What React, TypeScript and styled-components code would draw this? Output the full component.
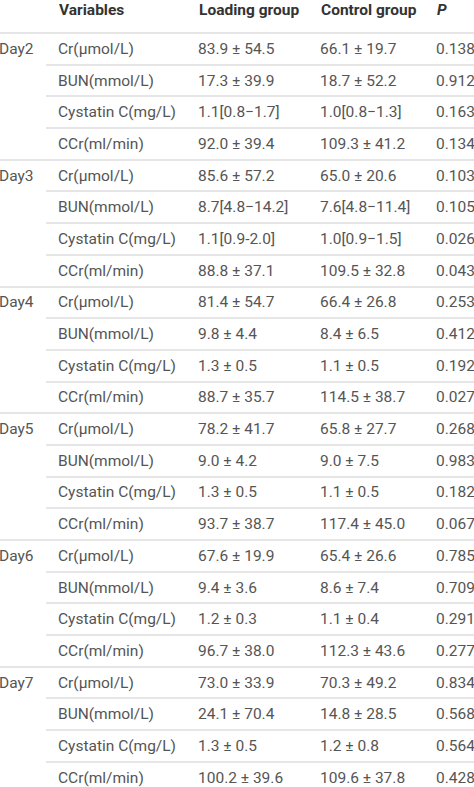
import React from "react";
import styled, { createGlobalStyle } from "styled-components";

const Global = createGlobalStyle`
  html, body { margin: 0; padding: 0; background: #fff; }
  body { width: 474px; height: 787px; overflow: hidden; font-family: Roboto, "Noto Sans", "Liberation Sans", sans-serif; }
`;

const Table = styled.div`
  width: 474px;
  display: flex;
  flex-direction: column;
`;

const Header = styled.div`
  display: grid;
  grid-template-columns: 59px 140px 122px 116px 1fr;
  height: 21px;
  padding-bottom: 11px;
  border-bottom: 2px solid #e6e6e6;
  align-items: start;
  font-size: 15.5px;
  line-height: 21px;
  font-weight: 700;
  color: #333;
  white-space: nowrap;
`;

const HeadCell = styled.div<{ $italic?: boolean }>`
  font-style: ${(p) => (p.$italic ? "italic" : "normal")};
`;

const Group = styled.div`
  display: flex;
  border-bottom: 2px solid #e6e6e6;
`;

const DayCell = styled.div`
  width: 47px;
  flex: none;
  height: 29.7px;
  display: flex;
  align-items: center;
  margin-left: -1px;
  font-size: 15.5px;
  color: #555;
`;

const Rows = styled.div`
  flex: 1;
  display: flex;
  flex-direction: column;
`;

const Row = styled.div<{ $first?: boolean }>`
  display: grid;
  grid-template-columns: 12px 140px 122px 116px 1fr;
  height: 29.7px;
  align-items: center;
  border-top: ${(p) => (p.$first ? "none" : "2px solid #e6e6e6")};
  font-size: 15.5px;
  color: #555;
  white-space: nowrap;
`;

const Cell = styled.div``;

type R = [string, string, string, string];
const groups: { day: string; rows: R[] }[] = [
  {
    day: "Day2",
    rows: [
      ["Cr(μmol/L)", "83.9 ± 54.5", "66.1 ± 19.7", "0.138"],
      ["BUN(mmol/L)", "17.3 ± 39.9", "18.7 ± 52.2", "0.912"],
      ["Cystatin C(mg/L)", "1.1[0.8−1.7]", "1.0[0.8−1.3]", "0.163"],
      ["CCr(ml/min)", "92.0 ± 39.4", "109.3 ± 41.2", "0.134"],
    ],
  },
  {
    day: "Day3",
    rows: [
      ["Cr(μmol/L)", "85.6 ± 57.2", "65.0 ± 20.6", "0.103"],
      ["BUN(mmol/L)", "8.7[4.8−14.2]", "7.6[4.8−11.4]", "0.105"],
      ["Cystatin C(mg/L)", "1.1[0.9-2.0]", "1.0[0.9−1.5]", "0.026"],
      ["CCr(ml/min)", "88.8 ± 37.1", "109.5 ± 32.8", "0.043"],
    ],
  },
  {
    day: "Day4",
    rows: [
      ["Cr(μmol/L)", "81.4 ± 54.7", "66.4 ± 26.8", "0.253"],
      ["BUN(mmol/L)", "9.8 ± 4.4", "8.4 ± 6.5", "0.412"],
      ["Cystatin C(mg/L)", "1.3 ± 0.5", "1.1 ± 0.5", "0.192"],
      ["CCr(ml/min)", "88.7 ± 35.7", "114.5 ± 38.7", "0.027"],
    ],
  },
  {
    day: "Day5",
    rows: [
      ["Cr(μmol/L)", "78.2 ± 41.7", "65.8 ± 27.7", "0.268"],
      ["BUN(mmol/L)", "9.0 ± 4.2", "9.0 ± 7.5", "0.983"],
      ["Cystatin C(mg/L)", "1.3 ± 0.5", "1.1 ± 0.5", "0.182"],
      ["CCr(ml/min)", "93.7 ± 38.7", "117.4 ± 45.0", "0.067"],
    ],
  },
  {
    day: "Day6",
    rows: [
      ["Cr(μmol/L)", "67.6 ± 19.9", "65.4 ± 26.6", "0.785"],
      ["BUN(mmol/L)", "9.4 ± 3.6", "8.6 ± 7.4", "0.709"],
      ["Cystatin C(mg/L)", "1.2 ± 0.3", "1.1 ± 0.4", "0.291"],
      ["CCr(ml/min)", "96.7 ± 38.0", "112.3 ± 43.6", "0.277"],
    ],
  },
  {
    day: "Day7",
    rows: [
      ["Cr(μmol/L)", "73.0 ± 33.9", "70.3 ± 49.2", "0.834"],
      ["BUN(mmol/L)", "24.1 ± 70.4", "14.8 ± 28.5", "0.568"],
      ["Cystatin C(mg/L)", "1.3 ± 0.5", "1.2 ± 0.8", "0.564"],
      ["CCr(ml/min)", "100.2 ± 39.6", "109.6 ± 37.8", "0.428"],
    ],
  },
];

export default function App() {
  return (
    <>
      <Global />
      <Table>
        <Header>
          <HeadCell />
          <HeadCell>Variables</HeadCell>
          <HeadCell>Loading group</HeadCell>
          <HeadCell>Control group</HeadCell>
          <HeadCell $italic>P</HeadCell>
        </Header>
        {groups.map((g) => (
          <Group key={g.day}>
            <DayCell>{g.day}</DayCell>
            <Rows>
              {g.rows.map((r, i) => (
                <Row key={i} $first={i === 0}>
                  <Cell />
                  <Cell>{r[0]}</Cell>
                  <Cell>{r[1]}</Cell>
                  <Cell>{r[2]}</Cell>
                  <Cell>{r[3]}</Cell>
                </Row>
              ))}
            </Rows>
          </Group>
        ))}
      </Table>
    </>
  );
}
